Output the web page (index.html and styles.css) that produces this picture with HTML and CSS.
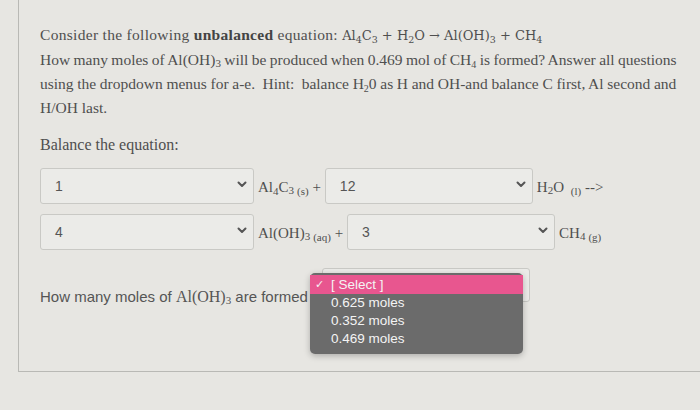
FILE: index.html
```html
<!DOCTYPE html>
<html>
<head>
<meta charset="utf-8">
<link rel="stylesheet" href="styles.css">
</head>
<body>
<div class="frame">
  <div class="intro">
    <div class="l1">Consider the following <b>unbalanced</b> equation: <span class="eq">Al<sub>4</sub>C<sub>3</sub> + H<sub>2</sub>O &rarr; Al(OH)<sub>3</sub> + CH<sub>4</sub></span></div>
    <div class="l2">How many moles of Al(OH)<span class="s3">3</span> will be produced when 0.469 mol of CH<sub class="sm">4</sub> is formed? Answer all questions</div>
    <div class="l3">using the dropdown menus for a-e.&nbsp; Hint:&nbsp; balance H<sub class="sm">2</sub>0 as H and OH-and balance C first, Al second and</div>
    <div>H/OH last.</div>
  </div>
  <p class="label">Balance the equation:</p>
  <div class="row">
    <div class="sel w1"><span>1</span><svg class="chev" viewBox="0 0 10 7"><polyline points="1.5,1.5 5,5 8.5,1.5"/></svg></div>
    <span class="term">Al<sub>4</sub>C<span class="s3">3</span><span class="ph">(s)</span> +</span>
    <div class="sel w2"><span>12</span><svg class="chev" viewBox="0 0 10 7"><polyline points="1.5,1.5 5,5 8.5,1.5"/></svg></div>
    <span class="term">H<span class="s3">2</span>O <span class="ph">(l)</span> --&gt;</span>
  </div>
  <div class="row">
    <div class="sel w1"><span>4</span><svg class="chev" viewBox="0 0 10 7"><polyline points="1.5,1.5 5,5 8.5,1.5"/></svg></div>
    <span class="term">Al(OH)<span class="s3">3</span><span class="ph">(aq)</span> +</span>
    <div class="sel w2"><span>3</span><svg class="chev" viewBox="0 0 10 7"><polyline points="1.5,1.5 5,5 8.5,1.5"/></svg></div>
    <span class="term">CH<span class="s3">4</span><span class="ph">(g)</span></span>
  </div>
  <div class="question">
    <span class="qtext">How many moles of <span class="serif">Al(OH)<span class="s3">3</span></span> are formed</span>
    <div class="sel w3"></div>
    <ul class="menu">
      <li class="active"><span class="check">&#10003;</span>[ Select ]</li>
      <li>0.625 moles</li>
      <li>0.352 moles</li>
      <li>0.469 moles</li>
    </ul>
  </div>
</div>
</body>
</html>
```
FILE: styles.css
```css
html, body {
  margin: 0;
  padding: 0;
  background: #e7e6e2;
}
body {
  width: 700px;
  height: 410px;
  overflow: hidden;
  font-family: "Liberation Serif", "Times New Roman", serif;
  color: #4f4f4f;
}
.frame {
  margin-left: 18px;
  height: 348px;
  padding: 23px 0 0 21px;
  border-left: 1px solid #b9b9b5;
  border-bottom: 1px solid #b9b9b5;
  position: relative;
}
.intro {
  font-size: 15.5px;
  line-height: 24px;
  white-space: nowrap;
}
.l1 { letter-spacing: 0.3px; }
.l2 { word-spacing: -0.5px; }
.l3 { word-spacing: -0.2px; }
.intro b { color: #444; }
sub {
  font-size: 11px;
  line-height: 0;
  vertical-align: -3px;
}
sub.sm { font-size: 10px; }
.s3 {
  font-size: 11px;
  vertical-align: -2px;
  line-height: 0;
}
.eq { font-family: "DejaVu Serif", "Liberation Serif", serif; font-size: 13px; letter-spacing: 0; }
.eq sub { font-size: 9.5px; }
.label {
  margin: 13px 0 0;
  font-size: 16px;
  line-height: 24px;
}
.row {
  display: flex;
  align-items: center;
  margin-top: 11px;
}
.row + .row { margin-top: 10px; }
.sel {
  box-sizing: border-box;
  height: 36px;
  border: 1px solid #c9c9c5;
  border-radius: 3px;
  background: #ebebe8;
  display: flex;
  align-items: center;
  justify-content: space-between;
  padding: 0 6px 0 14px;
  font-family: "Liberation Sans", Arial, sans-serif;
  font-size: 14px;
  color: #555;
}
.w1 { width: 214px; }
.w2 { width: 208px; }
.w3 { width: 208px; height: 34px; }
.chev {
  width: 10px;
  height: 7px;
  margin-top: -4px;
}
.chev polyline {
  fill: none;
  stroke: #555;
  stroke-width: 2;
  stroke-linecap: round;
  stroke-linejoin: round;
}
.term {
  font-size: 15px;
  margin: 0 4px 0 4px;
  white-space: nowrap;
  padding-top: 4px;
}
.ph {
  font-size: 11px;
  vertical-align: -3px;
  margin-left: 3px;
}
.question {
  position: relative;
  display: flex;
  align-items: center;
  margin-top: 16px;
  height: 36px;
}
.qtext {
  font-family: "Liberation Sans", Arial, sans-serif;
  font-size: 15px;
  color: #555;
  padding-top: 25px;
  white-space: nowrap;
  width: 282px;
  overflow: hidden;
}
.serif { font-family: "Liberation Serif", serif; font-size: 16px; }
.question .w3 { margin-left: 0; margin-top: 2px; }
.menu {
  position: absolute;
  left: 270px;
  top: 7px;
  width: 213px;
  margin: 0;
  padding: 2px 0 6px;
  list-style: none;
  background: #6b6b6b;
  border-radius: 5px;
  box-shadow: 0 2px 6px rgba(0,0,0,0.25);
  font-family: "Liberation Sans", Arial, sans-serif;
  font-size: 13.5px;
  color: #f4f4f4;
}
.menu li {
  height: 18px;
  line-height: 18px;
  padding-left: 21px;
  position: relative;
}
.menu li.active {
  background: #e8568f;
  height: 19px;
  line-height: 19px;
}
.check {
  position: absolute;
  left: 5px;
  font-size: 11px;
  font-family: "DejaVu Sans", sans-serif;
}
```
